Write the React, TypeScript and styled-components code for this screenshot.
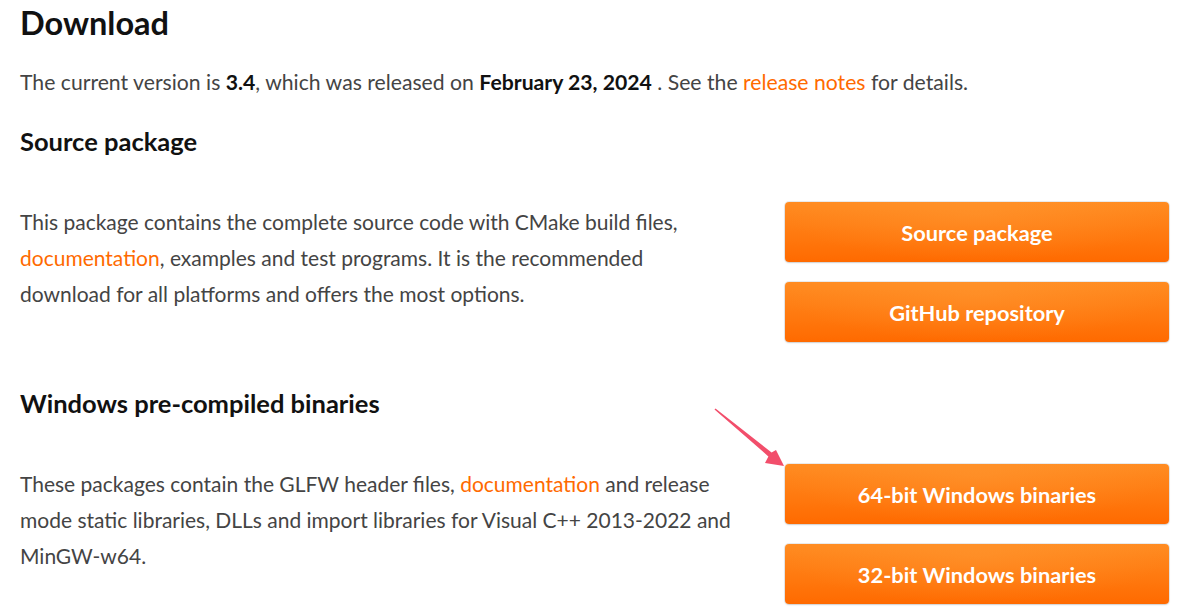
import React from 'react'
import styled, { createGlobalStyle } from 'styled-components'

const GlobalStyle = createGlobalStyle`
  html, body {
    margin: 0;
    padding: 0;
    background: #fff;
  }
  body {
    font-family: Lato, "Noto Sans", sans-serif;
    color: #444;
  }
`

const Page = styled.div`
  position: relative;
  width: 1187px;
  height: 613px;
  box-sizing: border-box;
  padding: 0 18px 0 20px;
  overflow: hidden;
`

const Title = styled.h1`
  margin: 0;
  padding-top: 3px;
  font-size: 32.5px;
  line-height: 40px;
  font-weight: 700;
  color: #111;
`

const Intro = styled.p`
  margin: 21px 0 0;
  font-size: 21.2px;
  line-height: 36px;

  b {
    color: #111;
  }
`

const Link = styled.a`
  color: #ff6a00;
  text-decoration: none;
`

const Section = styled.section`
  display: flex;
  flex-direction: column;
  padding-bottom: 20px;
`

const SectionTitle = styled.h3`
  margin: 19px 0 0;
  font-size: 25.5px;
  line-height: 44px;
  font-weight: 700;
  color: #111;
`

const Row = styled.div`
  display: flex;
  justify-content: space-between;
  align-items: flex-start;
  margin-top: 39px;
`

const Text = styled.p`
  margin: 2px 0 0;
  font-size: 21px;
  line-height: 36px;
`

const Buttons = styled.div`
  display: flex;
  flex-direction: column;
  gap: 20px;
  width: 384px;
`

const Button = styled.a`
  display: flex;
  align-items: center;
  justify-content: center;
  height: 60px;
  border-radius: 4px;
  background: radial-gradient(ellipse at 50% 20%, rgba(255, 160, 60, 0.35), transparent 70%),
    linear-gradient(#ff8c22, #ff6a00);
  box-shadow: 0 0 0 1px rgba(0, 0, 0, 0.08), 0 1px 2px rgba(0, 0, 0, 0.12);
  color: #fff;
  font-size: 21.8px;
  font-weight: 700;
  cursor: pointer;
`

const Arrow = styled.svg`
  position: absolute;
  left: 715px;
  top: 409px;
  overflow: visible;
`

const sections = [
  {
    title: 'Source package',
    text: (
      <>
        This package contains the complete source code with CMake build files,
        <br />
        <Link>documentation</Link>, examples and test programs. It is the recommended
        <br />
        download for all platforms and offers the most options.
      </>
    ),
    buttons: ['Source package', 'GitHub repository'],
  },
  {
    title: 'Windows pre-compiled binaries',
    text: (
      <>
        These packages contain the GLFW header files, <Link>documentation</Link> and release
        <br />
        mode static libraries, DLLs and import libraries for Visual C++ 2013-2022 and
        <br />
        MinGW-w64.
      </>
    ),
    buttons: ['64-bit Windows binaries', '32-bit Windows binaries'],
  },
]

const App = () => {
  return (
    <>
      <GlobalStyle />
      <Page>
        <Title>Download</Title>
        <Intro>
          The current version is <b>3.4</b>, which was released on <b>February 23, 2024</b> . See
          the <Link>release notes</Link> for details.
        </Intro>
        {sections.map((s) => (
          <Section key={s.title}>
            <SectionTitle>{s.title}</SectionTitle>
            <Row>
              <Text>{s.text}</Text>
              <Buttons>
                {s.buttons.map((b) => (
                  <Button key={b}>{b}</Button>
                ))}
              </Buttons>
            </Row>
          </Section>
        ))}
        <Arrow width="80" height="70" viewBox="0 0 80 70">
          <polygon
            points="-0.5,0.6 0.5,-0.6 56.6,43.6 61,41 69,57 50,54 53.4,47.4"
            fill="#f24e6b"
          />
        </Arrow>
      </Page>
    </>
  )
}

export default App
